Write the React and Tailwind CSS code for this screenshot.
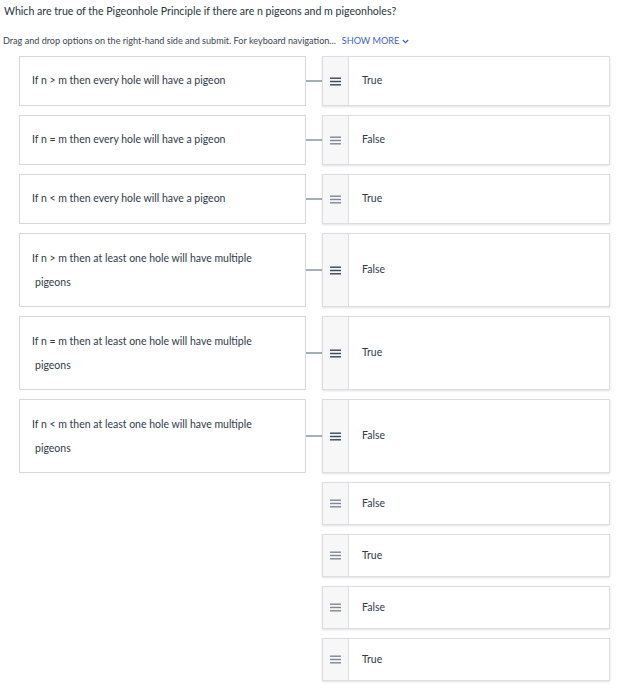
import React from "react";

const rows = [
  { left: ["If n > m then every hole will have a pigeon"], right: "True", h: "h-[50px]", dark: true },
  { left: ["If n = m then every hole will have a pigeon"], right: "False", h: "h-[50px]", dark: false },
  { left: ["If n < m then every hole will have a pigeon"], right: "True", h: "h-[50px]", dark: false },
  { left: ["If n > m then at least one hole will have multiple", "pigeons"], right: "False", h: "h-[74px]", dark: true },
  { left: ["If n = m then at least one hole will have multiple", "pigeons"], right: "True", h: "h-[74px]", dark: true },
  { left: ["If n < m then at least one hole will have multiple", "pigeons"], right: "False", h: "h-[74px]", dark: true },
];

const extras = ["False", "True", "False", "True"];

function Handle({ dark }) {
  return (
    <div className="w-[26px] shrink-0 self-stretch bg-[#f7f7f8] border-r border-[#dadce0] flex items-center justify-center">
      <svg width="11" height="9" viewBox="0 0 11 9">
        <rect x="0" y="0.5" width="11" height="1.4" fill={dark ? "#34495e" : "#7d8893"} />
        <rect x="0" y="3.8" width="11" height="1.4" fill={dark ? "#34495e" : "#7d8893"} />
        <rect x="0" y="7.1" width="11" height="1.4" fill={dark ? "#34495e" : "#7d8893"} />
      </svg>
    </div>
  );
}

function RightCard({ label, h, dark }) {
  return (
    <div className={`w-[288px] ${h} bg-white border border-[#dcdde1] shadow-[0_1px_2px_rgba(0,0,0,0.12)] flex items-center`}>
      <Handle dark={dark} />
      <span className="pl-[13px] text-[10.5px] text-[#2f3b4a]">{label}</span>
    </div>
  );
}

export default function App() {
  return (
    <div
      className="w-[622px] h-[690px] bg-white text-[#333d47] overflow-hidden"
      style={{ fontFamily: "Lato, 'Open Sans', sans-serif" }}
    >
      <div className="pl-[4px] pt-[3px] text-[10.6px] leading-[16px] text-[#28333e]">
        Which are true of the Pigeonhole Principle if there are n pigeons and m pigeonholes?
      </div>
      <div className="pl-[3px] pt-[15px] text-[9.1px] leading-[14px] text-[#3c4650] flex items-center">
        <span>Drag and drop options on the right-hand side and submit. For keyboard navigation...</span>
        <span className="ml-[6px] text-[#3b5fd0] flex items-center gap-[3px]">
          SHOW MORE
          <svg width="7" height="5" viewBox="0 0 7 5">
            <path d="M0.8 1 L3.5 3.6 L6.2 1" stroke="#3b5fd0" strokeWidth="1.2" fill="none" />
          </svg>
        </span>
      </div>
      <div className="pl-[19px] pt-[8px] flex flex-col gap-[9px]">
        {rows.map((r, i) => (
          <div key={i} className="flex items-center">
            <div className={`w-[287px] ${r.h} border border-[#d6d8dc] bg-white pl-[12px] flex flex-col justify-center text-[10.5px] text-[#2f3b4a]`}>
              {r.left.length === 1 ? (
                <span>{r.left[0]}</span>
              ) : (
                <>
                  <span className="leading-[24px]">{r.left[0]}</span>
                  <span className="leading-[24px] pl-[3px]">{r.left[1]}</span>
                </>
              )}
            </div>
            <div className="w-[16px] h-[2px] bg-[#a7b0b8]" />
            <RightCard label={r.right} h={r.h} dark={r.dark} />
          </div>
        ))}
        {extras.map((e, i) => (
          <div key={"e" + i} className="flex pl-[303px]">
            <RightCard label={e} h="h-[43px]" dark={false} />
          </div>
        ))}
      </div>
    </div>
  );
}
